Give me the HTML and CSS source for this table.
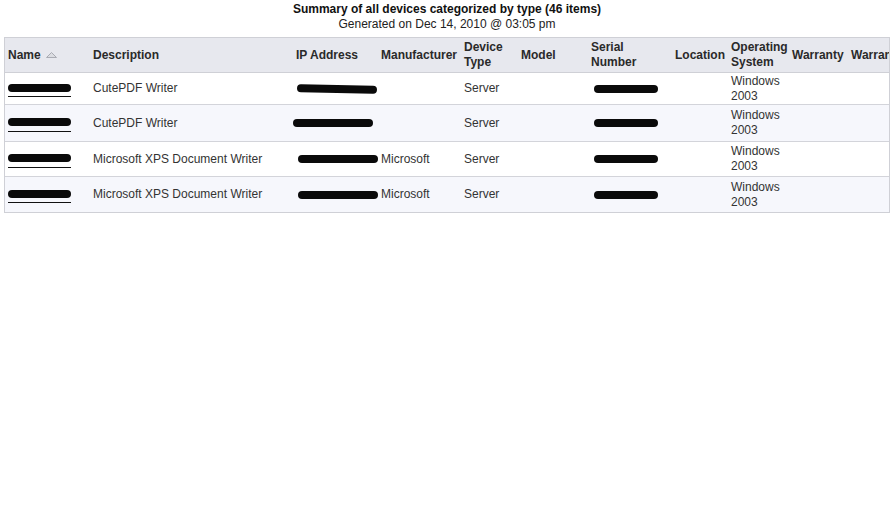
FILE: index.html
```html
<!DOCTYPE html>
<html>
<head>
<meta charset="utf-8">
<link rel="stylesheet" href="styles.css">
</head>
<body>
<div class="report">
  <div class="title">Summary of all devices categorized by type (46 items)</div>
  <div class="subtitle">Generated on Dec 14, 2010 @ 03:05 pm</div>
  <div class="grid-wrap">
    <table class="grid">
      <colgroup>
        <col class="c-name"><col class="c-desc"><col class="c-ip"><col class="c-man"><col class="c-type"><col class="c-model"><col class="c-serial"><col class="c-loc"><col class="c-os"><col class="c-war"><col class="c-war2">
      </colgroup>
      <thead>
        <tr>
          <th>Name <svg class="sort" width="11" height="6" viewBox="0 0 11 6"><path d="M0.5 5.5 L5.5 0.5 L10.5 5.5 Z" fill="#dcdde2" stroke="#a9abb3" stroke-width="1"/></svg></th>
          <th>Description</th>
          <th>IP Address</th>
          <th>Manufacturer</th>
          <th>Device Type</th>
          <th>Model</th>
          <th>Serial Number</th>
          <th>Location</th>
          <th>Operating System</th>
          <th>Warranty</th>
          <th>Warranty Expiration</th>
        </tr>
      </thead>
      <tbody>
        <tr class="r1">
          <td><span class="link"><span class="blot b-name"></span></span></td>
          <td>CutePDF Writer</td>
          <td><span class="blot b-ip"></span></td>
          <td></td>
          <td>Server</td>
          <td></td>
          <td><span class="blot b-serial"></span></td>
          <td></td>
          <td class="os">Windows<br>2003</td>
          <td></td>
          <td></td>
        </tr>
        <tr class="r2 alt">
          <td><span class="link"><span class="blot b-name"></span></span></td>
          <td>CutePDF Writer</td>
          <td><span class="blot b-ip2"></span></td>
          <td></td>
          <td>Server</td>
          <td></td>
          <td><span class="blot b-serial"></span></td>
          <td></td>
          <td class="os">Windows<br>2003</td>
          <td></td>
          <td></td>
        </tr>
        <tr class="r3">
          <td><span class="link"><span class="blot b-name"></span></span></td>
          <td>Microsoft XPS Document Writer</td>
          <td><span class="blot b-ip3"></span></td>
          <td>Microsoft</td>
          <td>Server</td>
          <td></td>
          <td><span class="blot b-serial"></span></td>
          <td></td>
          <td class="os">Windows<br>2003</td>
          <td></td>
          <td></td>
        </tr>
        <tr class="r4 alt">
          <td><span class="link"><span class="blot b-name"></span></span></td>
          <td>Microsoft XPS Document Writer</td>
          <td><span class="blot b-ip3"></span></td>
          <td>Microsoft</td>
          <td>Server</td>
          <td></td>
          <td><span class="blot b-serial"></span></td>
          <td></td>
          <td class="os">Windows<br>2003</td>
          <td></td>
          <td></td>
        </tr>
      </tbody>
    </table>
  </div>
</div>
</body>
</html>
```

FILE: styles.css
```css
html, body {
  margin: 0;
  padding: 0;
  background: #ffffff;
}
body {
  font-family: "Liberation Sans", Arial, sans-serif;
  font-size: 12px;
  color: #333333;
}
.report {
  padding: 2px 2px 0 4px;
}
.title {
  text-align: center;
  font-weight: bold;
  color: #111111;
  line-height: 15px;
}
.subtitle {
  text-align: center;
  color: #222222;
  line-height: 15px;
}
.grid-wrap {
  margin-top: 5px;
  width: 884px;
  border: 1px solid #cfd0d6;
  overflow: hidden;
}
.grid {
  border-collapse: collapse;
  table-layout: fixed;
  width: 960px;
}
.c-name { width: 85px; }
.c-desc { width: 203px; }
.c-ip { width: 85px; }
.c-man { width: 83px; }
.c-type { width: 57px; }
.c-model { width: 70px; }
.c-serial { width: 84px; }
.c-loc { width: 56px; }
.c-os { width: 61px; }
.c-war { width: 59px; }
.c-war2 { width: 117px; }
th {
  background: #e7e8ee;
  font-weight: bold;
  color: #2a2a2a;
  text-align: left;
  line-height: 15px;
  padding: 0 0 0 3px;
  height: 34px;
  border-bottom: 1px solid #cfd0d6;
  white-space: normal;
  vertical-align: middle;
}
th:last-child {
  white-space: nowrap;
}
.sort {
  vertical-align: 1px;
  margin-left: 2px;
}
td {
  padding: 0 0 0 3px;
  line-height: 15px;
  vertical-align: middle;
  border-bottom: 1px solid #d3d4da;
  color: #333333;
  white-space: nowrap;
}
tr.r1 td { height: 31px; }
tr.r2 td { height: 36px; }
tr.r3 td { height: 34px; }
tr.r4 td { height: 35px; border-bottom: none; }
tr.alt td { background: #f6f7fc; }
.link {
  display: inline-block;
  border-bottom: 1px solid #111111;
  padding-bottom: 1px;
}
.blot {
  display: inline-block;
  height: 8px;
  background: #0a0a0a;
  border-radius: 5px;
  vertical-align: middle;
}
.b-name { width: 63px; }
.b-ip { width: 80px; margin-left: 1px; transform: rotate(1deg); }
.b-ip2 { width: 80px; margin-left: -3px; }
.b-ip3 { width: 80px; margin-left: 2px; }
.b-serial { width: 64px; margin-left: 3px; }
```
